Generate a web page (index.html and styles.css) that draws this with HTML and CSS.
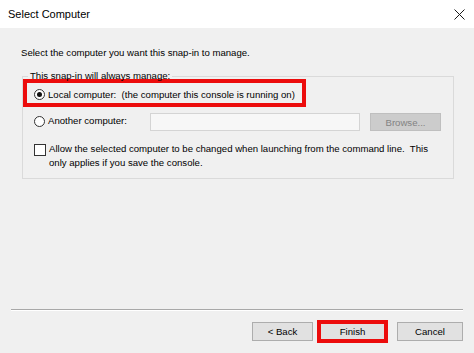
FILE: index.html
```html
<!DOCTYPE html>
<html lang="en">
<head>
<meta charset="utf-8">
<title>Select Computer</title>
<link rel="stylesheet" href="styles.css">
</head>
<body>
<div class="window">
  <header class="titlebar">
    <span class="title">Select Computer</span>
    <svg class="close" width="11" height="11" viewBox="0 0 11 11" aria-hidden="true">
      <path d="M0.5 0.5 L10.5 10.5 M10.5 0.5 L0.5 10.5" stroke="#1a1a1a" stroke-width="1" fill="none"/>
    </svg>
  </header>
  <main class="content">
    <p class="intro">Select the computer you want this snap-in to manage.</p>
    <fieldset class="group">
      <legend>This snap-in will always manage:</legend>
      <div class="highlight">
        <label class="option"><span class="radio checked"></span>Local computer:&nbsp; (the computer this console is running on)</label>
      </div>
      <div class="another-row">
        <label class="option another"><span class="radio"></span>Another computer:</label>
        <div class="field"></div>
        <button class="btn disabled" disabled>Browse...</button>
      </div>
      <div class="check-row">
        <span class="checkbox"></span>
        <p class="check-text">Allow the selected computer to be changed when launching from the command line.&nbsp; This<br>only applies if you save the console.</p>
      </div>
    </fieldset>
    <div class="spacer"></div>
    <div class="separator"></div>
    <div class="buttons">
      <button class="btn back">&lt; Back</button>
      <button class="btn finish">Finish</button>
      <button class="btn cancel">Cancel</button>
    </div>
  </main>
</div>
</body>
</html>
```

FILE: styles.css
```css
* { box-sizing: border-box; }
html, body { margin: 0; padding: 0; }
body {
  width: 474px;
  height: 353px;
  overflow: hidden;
  font-family: "Liberation Sans", Arial, sans-serif;
  font-size: 9.6px;
  color: #000;
  background: #f0f0f0;
}
.window {
  width: 474px;
  height: 353px;
  display: flex;
  flex-direction: column;
}
.titlebar {
  height: 28px;
  background: #ffffff;
  display: flex;
  align-items: center;
  justify-content: space-between;
  padding: 0 9px 0 8px;
  flex: none;
}
.title {
  font-size: 11px;
  color: #000;
}
.close { display: block; margin-top: 1px; }
.content {
  flex: 1;
  display: flex;
  flex-direction: column;
  background: #f0f0f0;
  padding-top: 19px;
}
.intro {
  margin: 0 0 0 21px;
  line-height: 12px;
}
.group {
  margin: 11px 0 0 22px;
  width: 432px;
  padding: 0 0 8px 0;
  border: 1px solid #dadada;
  min-width: 0;
}
.group legend {
  margin-left: 5px;
  padding: 0 2px;
  line-height: 12px;
}
.highlight {
  margin: -3px 0 0 0;
  width: 283px;
  height: 28px;
  border: 4px solid #ec0c0c;
  padding: 3px 0 0 7px;
  display: flex;
  align-items: center;
}
.option {
  display: flex;
  align-items: center;
  line-height: 12px;
  white-space: nowrap;
}
.radio {
  width: 11px;
  height: 11px;
  border: 1px solid #333;
  border-radius: 50%;
  background: #fff;
  margin-right: 3px;
  display: flex;
  align-items: center;
  justify-content: center;
  flex: none;
}
.radio.checked::after {
  content: "";
  width: 5px;
  height: 5px;
  border-radius: 50%;
  background: #111;
}
.another-row {
  display: flex;
  align-items: center;
  margin: 6px 0 0 11px;
  height: 18px;
}
.another {
  width: 116px;
  margin-top: -2px;
}
.field {
  width: 210px;
  height: 18px;
  background: #f7f7f7;
  border: 1px solid #d4d4d4;
}
.btn {
  font-family: "Liberation Sans", Arial, sans-serif;
  font-size: 9.6px;
  color: #000;
  background: #e1e1e1;
  border: 1px solid #adadad;
  padding: 0;
  height: 19px;
  line-height: 17px;
}
.btn.disabled {
  width: 71px;
  height: 18px;
  margin-left: 10px;
  background: #cccccc;
  border-color: #bfbfbf;
  color: #838383;
}
.check-row {
  display: flex;
  align-items: flex-start;
  margin: 11px 0 0 11px;
}
.checkbox {
  width: 12px;
  height: 12px;
  border: 1px solid #333;
  background: #fff;
  margin: 2px 3px 0 0;
  flex: none;
}
.check-text {
  margin: 0;
  line-height: 14px;
  white-space: nowrap;
}
.spacer { flex: 1; }
.separator {
  margin: 0 11px 0 11px;
  height: 2px;
  border-top: 1px solid #a8a8a8;
  border-bottom: 1px solid #ffffff;
}
.buttons {
  display: flex;
  align-items: center;
  justify-content: flex-end;
  height: 42px;
  padding: 0 11px 2px 0;
}
.back { width: 61px; }
.finish {
  width: 71px;
  height: 23px;
  margin-left: 4px;
  border: 4px solid #ec0c0c;
  line-height: 15px;
}
.cancel { width: 66px; margin-left: 9px; }
```
